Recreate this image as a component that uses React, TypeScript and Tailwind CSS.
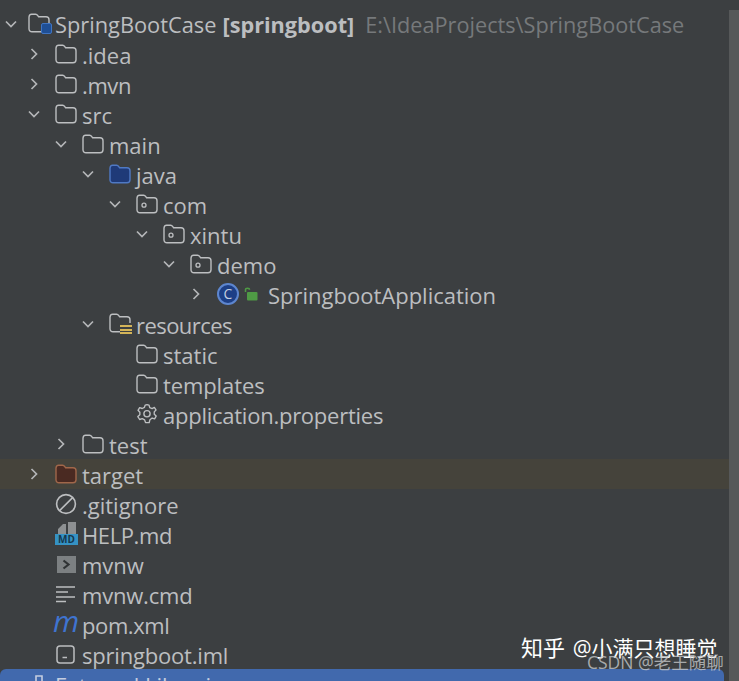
import React from "react";

const stroke = "#bdbfc1";

function Folder({ fill = "none", color = stroke, dot = false }: { fill?: string; color?: string; dot?: boolean }) {
  return (
    <svg width="22" height="20" viewBox="0 0 22 20" fill="none">
      <path
        d="M1 4.2C1 2.4 2 1.2 3.6 1.2H7.6C8.6 1.2 9.2 1.7 9.8 2.6L10.6 3.8H18C19.8 3.8 21 5 21 6.8V15.8C21 17.6 19.8 18.8 18 18.8H4C2.2 18.8 1 17.6 1 15.8Z"
        fill={fill}
        stroke={color}
        strokeWidth="1.4"
      />
      {dot && <circle cx="8" cy="11.2" r="2" stroke={color} strokeWidth="1.3" />}
    </svg>
  );
}

function RootIcon() {
  return (
    <div className="relative w-[24px] h-[22px]">
      <Folder />
      <div className="absolute left-[13px] top-[10px] w-[11px] h-[11px] rounded-[2px] bg-[#1f4f95] border border-[#3f74c2]" />
    </div>
  );
}

function ResourcesIcon() {
  return (
    <div className="relative w-[24px] h-[22px]">
      <Folder />
      <div className="absolute left-[11px] top-[10px] w-[12px] h-[11px] bg-[#3c3f41] flex flex-col justify-end gap-[1.5px]">
        <div className="h-[2px] bg-[#d3b458]" />
        <div className="h-[2px] bg-[#d3b458]" />
        <div className="h-[2px] bg-[#d3b458]" />
      </div>
    </div>
  );
}

function ClassIcon() {
  return (
    <div className="flex items-center w-[42px] gap-[5px]">
      <div className="w-[22px] h-[22px] rounded-full bg-[#1d3f86] border-2 border-[#5d86cf] flex items-center justify-center text-[14px] leading-none text-[#c3cde0]">
        C
      </div>
      <svg width="14" height="16" viewBox="0 0 14 16" fill="none">
        <path d="M1.5 6V3.5C1.5 1.8 5.5 1.5 5.5 3.8" stroke="#4f9a45" strokeWidth="1.5" />
        <rect x="3" y="6" width="10.5" height="8.5" rx="1" fill="#4f9a45" />
      </svg>
    </div>
  );
}

function Gear() {
  return (
    <svg width="22" height="22" viewBox="0 0 24 24" fill="none" stroke={stroke} strokeWidth="1.5">
      <path d="M12 1.8L14.2 2.3L15 5L17.6 6.1L20 4.8L21.8 7.6L19.9 9.7V12.3L22 14.3L20.3 17.3L17.6 16.4L15.2 18.2L14.4 21.4H10.4L9.4 18.4L6.8 17L4 18L2 14.8L4.2 12.8V10L2.2 8L4 5L6.8 6L9.2 4.7L10 2.3Z" strokeLinejoin="round" />
      <circle cx="12" cy="11.7" r="3.4" />
    </svg>
  );
}

function IgnoreIcon() {
  return (
    <svg width="22" height="22" viewBox="0 0 22 22" fill="none" stroke="#bcbec0" strokeWidth="1.6">
      <circle cx="11" cy="11" r="9.4" />
      <path d="M4.6 17.6L17.6 4.6" />
    </svg>
  );
}

function MdIcon() {
  return (
    <div className="relative w-[24px] h-[24px]">
      <svg className="absolute left-[3px] top-0" width="18" height="13" viewBox="0 0 18 13">
        <path d="M0 13V7L5 2H8V13Z M10 0H18V13H10Z" fill="#8d9092" />
      </svg>
      <div className="absolute left-0 top-[12px] w-[23px] h-[11px] bg-[#3592c4] text-[#16384f] text-[10px] leading-[11px] font-bold text-center">
        MD
      </div>
    </div>
  );
}

function ShellIcon() {
  return (
    <div className="w-[19px] h-[17px] ml-[2px] bg-[#7c8082] flex items-center justify-center">
      <svg width="9" height="11" viewBox="0 0 9 11" fill="none" stroke="#2f3234" strokeWidth="2.2">
        <path d="M1.5 1.5L6.5 5.5L1.5 9.5" />
      </svg>
    </div>
  );
}

function TextIcon() {
  return (
    <svg className="ml-[1px]" width="20" height="18" viewBox="0 0 20 18" fill="none" stroke="#bcbec0" strokeWidth="1.5">
      <path d="M0 2H19M0 7H12M0 12H19M0 16.5H10" />
    </svg>
  );
}

function ImlIcon() {
  return (
    <svg className="ml-[1px]" width="19" height="19" viewBox="0 0 19 19" fill="none" stroke="#bcbec0" strokeWidth="1.5">
      <rect x="1" y="1" width="17" height="17" rx="3" />
      <path d="M6.5 12.5H11" />
    </svg>
  );
}

function LibraryIcon() {
  return (
    <svg width="18" height="20" viewBox="0 0 18 20" fill="none" stroke="#c4cde0" strokeWidth="1.6">
      <path d="M1 9H8V19H1Z M8 2H14V19H8Z" />
    </svg>
  );
}

function Chevron({ open, color = "#b4b6b8" }: { open: boolean; color?: string }) {
  return (
    <svg width="14" height="14" viewBox="0 0 14 14" fill="none" stroke={color} strokeWidth="1.7">
      {open ? <path d="M2 4.5L7 9.5L12 4.5" /> : <path d="M4.5 2L9.5 7L4.5 12" />}
    </svg>
  );
}

type Item = {
  depth: number;
  label: string;
  chevron?: "open" | "closed";
  icon: React.ReactNode;
  iconWidth?: string;
  bg?: string;
  tracking?: string;
};

const folder = <Folder />;
const pkg = <Folder dot />;

// tracking values make up for Open Sans being a little wider than the IDE font
const rows: Item[] = [
  { depth: 1, label: ".idea", chevron: "closed", icon: folder },
  { depth: 1, label: ".mvn", chevron: "closed", icon: folder, tracking: "tracking-[-0.4px]" },
  { depth: 1, label: "src", chevron: "open", icon: folder },
  { depth: 2, label: "main", chevron: "open", icon: folder },
  { depth: 3, label: "java", chevron: "open", icon: <Folder fill="#1f3a78" color="#4f79c4" /> },
  { depth: 4, label: "com", chevron: "open", icon: pkg },
  { depth: 5, label: "xintu", chevron: "open", icon: pkg },
  { depth: 6, label: "demo", chevron: "open", icon: pkg },
  { depth: 7, label: "SpringbootApplication", chevron: "closed", icon: <ClassIcon />, iconWidth: "w-[51px]" },
  { depth: 3, label: "resources", chevron: "open", icon: <ResourcesIcon />, tracking: "tracking-[-0.55px]" },
  { depth: 4, label: "static", icon: folder },
  { depth: 4, label: "templates", icon: folder, tracking: "tracking-[-0.1px]" },
  { depth: 4, label: "application.properties", icon: <Gear />, tracking: "tracking-[-0.25px]" },
  { depth: 2, label: "test", chevron: "closed", icon: folder },
  { depth: 1, label: "target", chevron: "closed", icon: <Folder fill="#4a2a22" color="#a0674a" />, bg: "bg-[#45433b]" },
  { depth: 1, label: ".gitignore", icon: <IgnoreIcon /> },
  { depth: 1, label: "HELP.md", icon: <MdIcon />, tracking: "tracking-[-0.4px]" },
  { depth: 1, label: "mvnw", icon: <ShellIcon /> },
  { depth: 1, label: "mvnw.cmd", icon: <TextIcon />, tracking: "tracking-[-0.2px]" },
  { depth: 1, label: "pom.xml", icon: <span className="italic text-[30px] leading-[22px] text-[#3f74d0] -ml-[2px] block -mt-[6px]">m</span>, tracking: "tracking-[-0.4px]" },
  { depth: 1, label: "springboot.iml", icon: <ImlIcon />, tracking: "tracking-[-0.2px]" },
];

function Row({ item }: { item: Item }) {
  const chevronGap = 27 * item.depth;
  return (
    <div className={`flex items-center h-[30px] ${item.bg ?? ""}`}>
      <div className="shrink-0 flex justify-end" style={{ width: chevronGap + 14 }}>
        {item.chevron && <Chevron open={item.chevron === "open"} />}
      </div>
      <div className={`shrink-0 ml-[14px] ${item.iconWidth ?? "w-[27px]"} flex items-center`}>{item.icon}</div>
      <span className={`mt-[2px] text-[22px] leading-[30px] text-[#bcbec0] whitespace-nowrap ${item.tracking ?? ""}`}>{item.label}</span>
    </div>
  );
}

export default function App() {
  return (
    <div className="relative w-[739px] h-[681px] overflow-hidden bg-[#3c3f41] font-['Open_Sans','Noto_Sans_CJK_SC',sans-serif]">
      <div className="pt-[9px]">
        <div className="flex items-center h-[30px]">
          <div className="w-[28px] pl-[4px] shrink-0">
            <Chevron open />
          </div>
          <div className="w-[27px] shrink-0 flex items-center">
            <RootIcon />
          </div>
          <span className="mt-[2px] text-[21.8px] leading-[30px] text-[#bcbec0] whitespace-nowrap">SpringBootCase</span>
          <span className="mt-[2px] ml-[6px] text-[21.7px] leading-[30px] font-bold text-[#bcbec0] whitespace-nowrap">[springboot]</span>
          <span className="mt-[2px] ml-[11px] text-[21.7px] leading-[30px] text-[#76797b] whitespace-nowrap">E:\IdeaProjects\SpringBootCase</span>
        </div>
        {rows.map((item) => (
          <Row key={item.label} item={item} />
        ))}
        <div className="flex items-center h-[30px] w-[724px] rounded-t-[6px] bg-[#4169ad]">
          <div className="w-[28px] pl-[4px] shrink-0">
            <Chevron open color="#c4cde0" />
          </div>
          <div className="w-[27px] shrink-0">
            <LibraryIcon />
          </div>
          <span className="mt-[2px] text-[22px] leading-[30px] text-[#c4cde0] whitespace-nowrap">External Libraries</span>
        </div>
      </div>

      {/* scrollbar thumb */}
      <div className="absolute left-[729px] top-[10px] w-[10px] h-[671px] bg-[#565859]" />

      {/* watermarks */}
      <div className="absolute left-[521px] top-[629px] text-[22px] leading-[36px] text-white whitespace-nowrap">
        知乎 <span className="ml-[2px] text-[21px]">@小满只想睡觉</span>
      </div>
      <div className="absolute left-[587px] top-[651px] text-[17.5px] leading-[22px] text-[#c5c7c9]/80 whitespace-nowrap">
        CSDN @老王随聊
      </div>
    </div>
  );
}
